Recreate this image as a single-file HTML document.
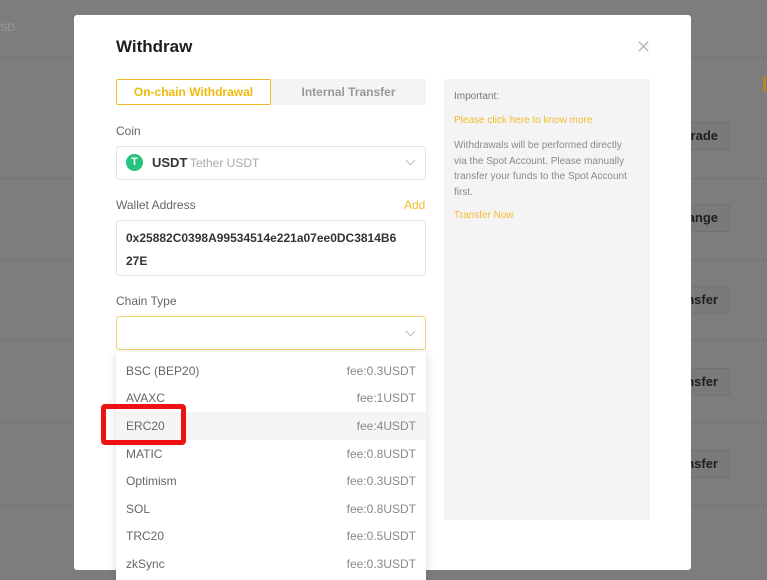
<!DOCTYPE html>
<html style="width:767px;height:580px;overflow:hidden"><head><meta charset="utf-8"><style>
*{box-sizing:border-box;margin:0;padding:0}
body{width:767px;height:580px;overflow:hidden;background:#7d7d7d;font-family:"Liberation Sans",sans-serif;position:relative}
.abs{position:absolute}
.line{position:absolute;left:0;right:0;height:1px;background:#737373}
.bbtn{position:absolute;left:662px;width:68px;height:28px;border:1px solid #727272;border-radius:3px;background:#7a7a7a;font-weight:bold;font-size:13px;color:#1e1e1e;line-height:26px;text-align:right;padding-right:11px}
.modal{position:absolute;left:74px;top:15px;width:617px;height:555px;background:#fff;border-radius:3px}
.lbl{position:absolute;font-size:12px;color:#666}
.box{position:absolute;border:1px solid #e3e3e3;border-radius:3px;background:#fff}
.chev{position:absolute;width:7px;height:7px;border-right:1px solid #bbb;border-bottom:1px solid #bbb;transform:rotate(45deg)}
.dd{position:absolute;left:116px;top:352px;width:310px;height:228px;background:#fff;box-shadow:0 2px 10px rgba(0,0,0,.15);overflow:hidden}
.row{position:absolute;left:0;width:310px;height:28px;font-size:12px;color:#666;line-height:28px;padding:0 10px}
.row span{float:right;color:#888}
</style></head><body>
<div class="abs" style="left:0;top:22px;font-size:11px;color:#9a9a9a">SD</div>
<div class="line" style="top:57px"></div>
<div class="line" style="top:178px"></div>
<div class="line" style="top:259px"></div>
<div class="line" style="top:340px"></div>
<div class="line" style="top:422px"></div>
<div class="line" style="top:505px"></div>
<div class="abs" style="left:763px;top:76px;width:3px;height:16px;background:#b08a2a"></div>
<div class="bbtn" style="top:122px">rade</div>
<div class="bbtn" style="top:204px">ange</div>
<div class="bbtn" style="top:286px">nsfer</div>
<div class="bbtn" style="top:368px">nsfer</div>
<div class="bbtn" style="top:450px">nsfer</div>

<div class="modal"></div>
<div class="abs" style="left:116px;top:37px;font-size:17px;font-weight:bold;color:#1e1e1e">Withdraw</div>
<div class="abs" style="left:636px;top:37px;font-size:18px;color:#c0c0c0;font-weight:300">&#x2715;</div>

<div class="abs" style="left:116px;top:79px;width:310px;height:26px;background:#f4f4f4;border-radius:2px"></div>
<div class="abs" style="left:116px;top:79px;width:155px;height:26px;border:1px solid #f3ba2f;border-radius:2px;background:#fff;color:#f0b90b;font-size:12px;font-weight:bold;text-align:center;line-height:24px">On-chain Withdrawal</div>
<div class="abs" style="left:271px;top:79px;width:155px;height:26px;color:#999;font-size:12px;font-weight:bold;text-align:center;line-height:26px">Internal Transfer</div>

<div class="lbl" style="left:116px;top:124px">Coin</div>
<div class="box" style="left:116px;top:146px;width:310px;height:34px"></div>
<div class="abs" style="left:126px;top:154px;width:17px;height:17px;border-radius:50%;background:#26c37a;color:#fff;font-size:11px;font-weight:bold;text-align:center;line-height:17px">T</div>
<div class="abs" style="left:152px;top:155px;font-size:13px;font-weight:bold;color:#333">USDT</div>
<div class="abs" style="left:190px;top:156px;font-size:12px;color:#aaa">Tether USDT</div>
<div class="chev" style="left:407px;top:157px"></div>

<div class="lbl" style="left:116px;top:198px">Wallet Address</div>
<div class="abs" style="left:404px;top:198px;font-size:12px;color:#f3ba2f">Add</div>
<div class="box" style="left:116px;top:220px;width:310px;height:56px"></div>
<div class="abs" style="left:126px;top:227px;font-size:12px;font-weight:bold;color:#333;line-height:23px;width:295px;word-break:break-all">0x25882C0398A99534514e221a07ee0DC3814B6<br>27E</div>

<div class="lbl" style="left:116px;top:294px">Chain Type</div>
<div class="box" style="left:116px;top:316px;width:310px;height:34px;border-color:#f5cf73"></div>
<div class="chev" style="left:407px;top:328px"></div>

<div class="abs" style="left:444px;top:79px;width:206px;height:441px;background:#f4f4f4;border-radius:2px"></div>
<div class="abs" style="left:454px;top:91px;font-size:10px;color:#777">Important:</div>
<div class="abs" style="left:454px;top:115px;font-size:10px;color:#f3ba2f">Please click here to know more</div>
<div class="abs" style="left:454px;top:138px;width:180px;font-size:10px;color:#8a8a8a;line-height:15.5px">Withdrawals will be performed directly via the Spot Account. Please manually transfer your funds to the Spot Account first.</div>
<div class="abs" style="left:454px;top:210px;font-size:10px;color:#f3ba2f">Transfer Now</div>

<div class="dd">
<div class="row" style="top:5px">BSC (BEP20)<span>fee:0.3USDT</span></div>
<div class="row" style="top:32px">AVAXC<span>fee:1USDT</span></div>
<div class="row" style="top:60px;background:#f5f5f5">ERC20<span>fee:4USDT</span></div>
<div class="row" style="top:88px">MATIC<span>fee:0.8USDT</span></div>
<div class="row" style="top:115px">Optimism<span>fee:0.3USDT</span></div>
<div class="row" style="top:143px">SOL<span>fee:0.8USDT</span></div>
<div class="row" style="top:170px">TRC20<span>fee:0.5USDT</span></div>
<div class="row" style="top:198px">zkSync<span>fee:0.3USDT</span></div>
</div>
<div class="abs" style="left:101px;top:404px;width:85px;height:41px;border:5px solid #ee1111;border-radius:4px"></div>
</body></html>
